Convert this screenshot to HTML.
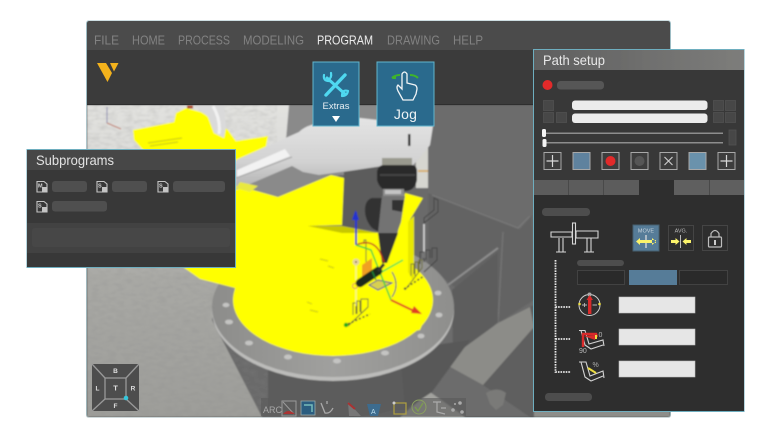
<!DOCTYPE html>
<html><head><meta charset="utf-8"><style>
html,body{margin:0;padding:0;background:#fff;width:768px;height:439px;overflow:hidden}
svg{display:block}
text{font-family:"Liberation Sans",sans-serif}
</style></head><body>
<svg width="768" height="439" viewBox="0 0 768 439" xmlns="http://www.w3.org/2000/svg">
<defs>
<filter id="b" x="-5%" y="-5%" width="110%" height="110%"><feGaussianBlur stdDeviation="0.7"/></filter>
<filter id="all" x="0" y="0" width="100%" height="100%"><feGaussianBlur stdDeviation="0.35"/></filter>
<filter id="n" x="0" y="0" width="100%" height="100%"><feTurbulence type="fractalNoise" baseFrequency="0.12 0.3" numOctaves="3" seed="4"/><feColorMatrix values="0 0 0 0 0.25 0 0 0 0 0.25 0 0 0 0 0.25 1.6 0 0 0 -0.6"/></filter>
<linearGradient id="floor" x1="0" y1="0" x2="0" y2="1"><stop offset="0" stop-color="#e2e2df"/><stop offset=".18" stop-color="#dcdcd9"/><stop offset=".55" stop-color="#a9a9a5"/><stop offset="1" stop-color="#9d9d99"/></linearGradient>
<linearGradient id="arm" x1="0" y1="0" x2="0" y2="1"><stop offset="0" stop-color="#e4e4e4"/><stop offset=".6" stop-color="#d2d2d2"/><stop offset="1" stop-color="#b0b0b0"/></linearGradient>
<linearGradient id="title" x1="0" y1="0" x2="1" y2="0"><stop offset="0" stop-color="#5f5f5f"/><stop offset="1" stop-color="#7d7d7b"/></linearGradient>
<linearGradient id="flange" x1="0" y1="0" x2="1" y2="0"><stop offset="0" stop-color="#8c8c8a"/><stop offset=".5" stop-color="#a0a09e"/><stop offset="1" stop-color="#8e8e8c"/></linearGradient>
</defs>
<g filter="url(#all)">
<!-- main window -->
<rect x="86.500" y="20.500" width="584" height="397" rx="3" fill="#4a4a4a" stroke="#9dbcc4"/>

<!-- scene -->
<g filter="url(#b)">
<rect x="87" y="105" width="583" height="312" fill="#6a6a6a"/>
<!-- floor -->
<polygon points="87,105 290,105 286,140 240,190 212,320 262,417 87,417" fill="url(#floor)"/>
<rect x="87" y="105" width="190" height="312" filter="url(#n)" opacity=".28"/>
<!-- back wall -->
<polygon points="289,105 430,105 430,175 340,175 280,198 240,190 286,140" fill="#8a8a8a"/>
<polygon points="344,172 384,165 384,232 342,226" fill="#5b5b5b"/>
<!-- floor strip near arm -->
<rect x="416" y="128" width="13" height="60" fill="#d6d6d0"/>
<rect x="418" y="142" width="11" height="2" fill="#e0d890"/><rect x="418" y="170" width="11" height="2" fill="#d8b070"/>
<!-- machine -->
<rect x="428" y="105" width="242" height="312" fill="#6c6c6c"/>
<polygon points="428,193 520,229 532,215 534,300 500,322 452,285 428,265" fill="#636363"/>
<path d="M432 195 L518 228 L530 216" fill="none" stroke="#7a7a7a" stroke-width="1.200"/>
<path d="M503 232 L498 322" stroke="#7a7a7a" stroke-width="1"/>
<path d="M448 285 L498 248" stroke="#8e8e8e" stroke-width="2"/>
<polygon points="452,290 498,252 498,322 453,360" fill="#5d5d5d"/>
<!-- slab -->
<polygon points="443,363 498,323 534,305 670,305 670,417 530,417 483,385" fill="#5e5e5e"/>
<polygon points="443,363 498,323 530,307 534,327 483,385" fill="#8c8c88"/>
<polygon points="534,300 670,300 670,417 534,417" fill="#8d8d89"/>
<!-- lower floor right -->
<polygon points="400,417 430,392 465,417" fill="#a2a29e"/>
<path d="M486 393 Q497 386 506 393 L503 405 L496 410 L490 404Z" fill="#7a7a78"/>
<!-- pedestal -->
<rect x="268" y="350" width="140" height="60" fill="#5c5c5c"/>
<ellipse cx="338" cy="398" rx="70" ry="19" fill="#5c5c5c"/>
<polygon points="400,350 470,340 432,392 405,410" fill="#585858"/>
<!-- flange -->
<ellipse cx="333" cy="310" rx="121" ry="71" fill="#bcbcba"/>
<ellipse cx="333" cy="307" rx="121" ry="70" fill="url(#flange)"/>
<g fill="#c4c4c2"><ellipse cx="226" cy="305" rx="3.500" ry="2.200"/><ellipse cx="229" cy="322" rx="4" ry="2.400"/><ellipse cx="249" cy="343" rx="4" ry="2.400"/><ellipse cx="288" cy="357" rx="4" ry="2.500"/><ellipse cx="337" cy="361" rx="4" ry="2.500"/><ellipse cx="385" cy="353" rx="4" ry="2.500"/><ellipse cx="421" cy="336" rx="3.500" ry="2.400"/><ellipse cx="439" cy="315" rx="3.500" ry="2.400"/><ellipse cx="438" cy="293" rx="3.500" ry="2.400"/></g>
<!-- yellow upper part -->
<polygon fill="#ffff00" points="133,130 134,140 143,150 235,162 266,147 268,136 236,141 228,130 209,117 201,112 186,108 176,113 174,122"/>
<!-- yellow main -->
<polygon fill="#ffff00" points="200,150 236,186 253,190 278,197 331,175 344,178 342,225 308,226 381,233 384,250 397,236 405,193 423,198 417,208 408,223 408,270 433,300 420,330 333,345 240,320 233,300 235,288 200,279 183,267 150,200"/>
<ellipse cx="333" cy="300" rx="100" ry="56" fill="#ffff00"/>
<polygon points="308,226 342,226 378,233 342,233" fill="#c7c700"/>
<polygon points="408,222 414,216 414,282 408,272" fill="#e8e800"/>
<g stroke="#cfcf10" stroke-width="1.200" fill="none"><path d="M148 143 L182 138M150 146 L178 142"/><path d="M320 259 L328 261M328 266 L334 268M307 302 L312 304M310 310 L318 312"/></g>
<!-- upper white thing -->
<path d="M191 105 H224 L226 127 L224 138 L214 133 L208 117 L201 110Z" fill="#dadada"/>
<path d="M213 106 Q221 120 219 134" stroke="#f2f2f2" stroke-width="3" fill="none"/>
<!-- axes small -->
<path d="M107 107 V123" stroke="#8a8ab0" stroke-width="1"/><path d="M107 123 L121 129" stroke="#c07a6a" stroke-width="1"/>
<path d="M187 107 H193" stroke="#b04a20" stroke-width="3"/>
<!-- arm -->
<path d="M236 160 L299 132 Q306 125 320 123 L360 118 L433 126 L430 145 L418 160 L412 166 H383 L356 170 L319 175 L303 172 L292 166 L236 190Z" fill="url(#arm)"/>
<polygon points="237,170 285,149 290,156 237,178" fill="#f2f2f2"/>
<path d="M236 178 L292 157" stroke="#a4a4a4" stroke-width="1.200"/>
<path d="M236 188 L250 192 L258 186 L240 182Z" fill="#e8e840"/>
<rect x="408" y="134" width="2.500" height="12" fill="#222"/>
<!-- wrist -->
<rect x="382" y="158" width="30" height="10" fill="#9a9a8e"/>
<path d="M377 172 Q378 165 384 165 H412 Q417 165 417 172 V180 Q415 191 405 191 H390 Q380 191 377 180Z" fill="#2b2b2b"/>
<path d="M380 175 H415" stroke="#4c4c4c" stroke-width="1.500"/>
<rect x="383" y="189" width="21" height="9" fill="#8c8c8c"/>
<rect x="385" y="190" width="16" height="4" fill="#c4c4c4"/>
<path d="M372 198 Q365 200 365 210 Q365 220 372 228 L382 234 L384 198Z" fill="#333"/>
<polygon points="382,196 405,196 401,222 397,233 378,233" fill="#737373"/>
<polygon points="392,200 404,200 402,212 392,210" fill="#303030"/>
<polygon points="378,233 398,233 387,263 382,263" fill="#303030"/>
<!-- brackets -->
<g fill="none" stroke="#444" stroke-width="1"><path d="M424 223 L438 212 V200 L434 198 V210 L424 218 V223Z"/><path d="M424 224 V258" stroke="#ddd" stroke-width="1.500"/><path d="M420 264 V252 H424 V262M426 260 V250 H430 V258M432 258 V248 H437 V260 L424 272"/></g>
<g fill="none" stroke="#707030" stroke-width="1"><path d="M411 276 V264 H414 V274M415 276 V262 H418 V272M419 272 V260 H422 V268 L405 290"/><path d="M353 315 V303 H356 V314M357 314 V301 H360 V312M361 313 V299 H368 V307 L348 326"/><path d="M364 244 V240 H366 V262"/></g>
<path d="M348 324 L370 314" stroke="#333" stroke-width="1.500" stroke-dasharray="2 2"/><circle cx="346" cy="325" r="2.200" fill="#1faa1f"/>
<path d="M404 289 L424 276" stroke="#333" stroke-width="1.500" stroke-dasharray="2 2"/>
<!-- widgets -->
<polygon points="378,280 392,283 378,290 369,285" fill="#d8d050" stroke="#4040a0" stroke-width="1"/>
<polygon points="362,265 372,258 372,272 362,280" fill="#f0a020"/>
<path d="M356 245 Q372 238 380 252 L384 262" fill="none" stroke="#c03020" stroke-width="1.400"/>
<path d="M356 245 V212" stroke="#2030d0" stroke-width="2"/><polygon points="355.500,210 352,220 359,220" fill="#2030d0"/>
<path d="M356 245 L371 250 L391 300" fill="none" stroke="#40d040" stroke-width="1.500"/><path d="M371 278 L403 260" stroke="#50e050" stroke-width="1.500"/>
<path d="M391 300 L414 311" stroke="#e04020" stroke-width="2"/><polygon points="422,314 411,313 414,306" fill="#e04020"/>
<path d="M392 272 Q400 285 392 297" fill="none" stroke="#303090" stroke-width="1"/>
<path d="M356 262 V280 M356 288 V306" stroke="#f4f0c0" stroke-width=".8"/>
<circle cx="356" cy="262" r="3" fill="#f0d8a0" stroke="#bbb" stroke-width=".5"/><circle cx="356" cy="262" r="1" fill="#664"/>
<circle cx="355" cy="286" r="2.500" fill="none" stroke="#e08060"/>
<path d="M360 283 L378 271" stroke="#1e2a1e" stroke-width="8.500" stroke-linecap="round"/>
<path d="M372 271 L376 280" stroke="#1f8a3a" stroke-width="1.200"/>
<path d="M378 271 L384 264" stroke="#333" stroke-width="3"/>
</g>

<!-- menu + toolbar -->
<path d="M87 24 Q87 21 90 21 H667 Q670 21 670 24 V50 H87Z" fill="#4b4b4b"/>
<rect x="87" y="50" width="583" height="55" fill="#3a3a3a"/>
<rect x="87" y="104" width="583" height="1" fill="#2e2e2e"/>
<g font-size="13" fill="#828282">
<text x="94" y="44.500" textLength="25" lengthAdjust="spacingAndGlyphs">FILE</text>
<text x="132" y="44.500" textLength="33" lengthAdjust="spacingAndGlyphs">HOME</text>
<text x="178" y="44.500" textLength="52" lengthAdjust="spacingAndGlyphs">PROCESS</text>
<text x="243" y="44.500" textLength="61" lengthAdjust="spacingAndGlyphs">MODELING</text>
<text x="317" y="44.500" textLength="56" lengthAdjust="spacingAndGlyphs" fill="#ececec">PROGRAM</text>
<text x="387" y="44.500" textLength="53" lengthAdjust="spacingAndGlyphs">DRAWING</text>
<text x="453" y="44.500" textLength="30" lengthAdjust="spacingAndGlyphs">HELP</text>
</g>
<!-- logo -->
<path d="M97 63 H106 L112 73 L107.500 82 Z" fill="#f3b21f"/><path d="M110 63 H118.500 L114 71.500Z" fill="#f3b21f"/>

<!-- Extras -->
<rect x="313" y="62" width="46" height="64" fill="#2b6a8d" stroke="#62b5cd"/>
<g fill="none" stroke="#4fd8f0" stroke-linecap="round">
<path d="M345 75 L326 95" stroke-width="3.400"/>
<path d="M327 78 L345 94" stroke-width="3"/>
<path d="M324 75 Q323 81 329 81 M331 73 Q332 78 328 80" stroke-width="2.200"/>
<path d="M348 91 Q342 89 342 96 M348 91 Q347 96 342 96" stroke-width="2.200"/>
</g>
<text x="336" y="109" font-size="9.500" fill="#e6eef2" text-anchor="middle">Extras</text>
<polygon points="332,116 340,116 336,122" fill="#fff"/>

<!-- Jog -->
<rect x="377" y="62" width="57" height="64" fill="#2b6a8d" stroke="#62b5cd"/>
<path d="M403 100 L398 91 Q396 87 398 85 L402 89 V74 Q404.500 70 407 74 V83 L415 85 Q417 86 417 89 L416 94 L413 100Z" fill="none" stroke="#f0f4f6" stroke-width="1.300"/>
<path d="M392 78 Q395 75 400 75" stroke="#3fb52a" stroke-width="2" fill="none"/><polygon points="392,79 396,75 396,79" fill="#3fb52a"/>
<path d="M410 75 Q415 75 418 78" stroke="#3fb52a" stroke-width="2" fill="none"/>
<text x="405.500" y="119" font-size="14" fill="#eef3f5" text-anchor="middle" letter-spacing=".2">Jog</text>

<!-- view cube -->
<polygon points="92,364 139,364 139,411 92,411" fill="#4e4e4e"/>
<path d="M92 364 L105 378 M139 364 L126 378 M92 411 L105 399 M139 411 L126 399" stroke="#999" stroke-width="1.300"/>
<rect x="105" y="378" width="21" height="21" fill="#4e4e4e" stroke="#999" stroke-width="1.300"/>
<circle cx="126" cy="398" r="2.300" fill="#35c7dc"/>
<g font-size="6.500" font-weight="bold" fill="#e0e0e0" text-anchor="middle"><text x="115.500" y="373">B</text><text x="115.500" y="408">F</text><text x="97.500" y="390.500">L</text><text x="133" y="390.500">R</text><text x="115.500" y="390.500" font-size="7.500">T</text></g>

<!-- bottom toolbar -->
<rect x="261" y="398" width="205" height="18" fill="#5a5a5a" opacity=".6"/>
<text x="263" y="413" font-size="9" fill="#a8a8a8">ARC</text>
<path d="M282 401 H296 V416 H282Z M283 402 L294 414" fill="none" stroke="#9a9a9a" stroke-width="1"/><path d="M283 414 Q288 408 295 414Z" fill="#a33"/>
<rect x="301" y="401" width="14" height="14" fill="#2c5d80" stroke="#9aa" stroke-width=".8"/><path d="M304 405 H312 V412" fill="none" stroke="#7bb" stroke-width="1.500"/>
<path d="M321 403 L325 413 Q330 414 333 408 M327 401 V404" fill="none" stroke="#aaa" stroke-width="1.300"/>
<polygon points="348,402 349,416 361,416" fill="#777"/><path d="M348 403 L355 409" stroke="#a33" stroke-width="2"/>
<polygon points="367,404 381,404 378,416 370,416" fill="#3c6c8f"/><text x="371" y="414" font-size="7" fill="#bde">A</text>
<rect x="394" y="403" width="12" height="11" fill="none" stroke="#b0a040" stroke-width="1.200"/><circle cx="394" cy="403" r="1.500" fill="#ccc"/>
<circle cx="419" cy="407" r="7" fill="none" stroke="#8aa060" stroke-width="1"/><path d="M415 407 L418 411 L423 403" fill="none" stroke="#7c9c50" stroke-width="1.300"/>
<path d="M433 402 H441 M437 402 V412 L445 414 M441 408 H446" fill="none" stroke="#aaa" stroke-width="1.200"/>
<g fill="#aaa"><circle cx="453" cy="410" r="1.800"/><circle cx="460" cy="403" r="1.800"/><circle cx="462" cy="412" r="1.800"/><circle cx="455" cy="404" r="1"/></g>

<!-- Subprograms panel -->
<rect x="26.500" y="149.500" width="209" height="118" fill="#393939" stroke="#6eaebf"/>
<rect x="27" y="150" width="208" height="20" fill="#474747"/>
<text x="36" y="165" font-size="14" fill="#e2e2e2" textLength="78" lengthAdjust="spacingAndGlyphs">Subprograms</text>
<rect x="27" y="223" width="208" height="30" fill="#434343"/>
<rect x="32" y="228" width="198" height="19" rx="3" fill="#474747"/>
<g fill="#4f4f4f">
<rect x="52" y="181" width="35" height="11" rx="3"/><rect x="112" y="181" width="35" height="11" rx="3"/><rect x="173" y="181" width="52" height="11" rx="3"/><rect x="52" y="201" width="55" height="10.500" rx="3"/>
</g>
<g fill="none" stroke="#c4c4c4" stroke-width="1.100">
<path d="M37 181.500 H44 L47 184 V192 H37Z"/><path d="M97 181.500 H104 L107 184 V192 H97Z"/><path d="M158 181.500 H165 L168 184 V192 H158Z"/><path d="M37 201.500 H44 L47 204 V212 H37Z"/>
</g>
<g fill="#c4c4c4"><rect x="42" y="187" width="4.500" height="4.500"/><rect x="102" y="187" width="4.500" height="4.500"/><rect x="163" y="187" width="4.500" height="4.500"/><rect x="42" y="207" width="4.500" height="4.500"/></g>
<g font-size="5.500" font-weight="bold" fill="#d0d0d0"><text x="38" y="187.500">M</text><text x="98" y="187.500">S</text><text x="159" y="187.500">S</text><text x="38" y="207.500">S</text></g>

<!-- Path setup panel -->
<rect x="533.500" y="49.500" width="211" height="362" fill="#2d2d2d" stroke="#6eaebf"/>
<rect x="534" y="50" width="210" height="20" fill="url(#title)"/>
<rect x="534" y="70" width="210" height="110" fill="#383838"/>
<text x="543" y="65" font-size="14" fill="#e8e8e8" textLength="62" lengthAdjust="spacingAndGlyphs">Path setup</text>
<circle cx="547.500" cy="85" r="5" fill="#e22a2a"/>
<rect x="557" y="81" width="47" height="8.500" rx="3.500" fill="#565656"/>
<g fill="#464646" stroke="#525252" stroke-width=".8">
<rect x="543.500" y="100.500" width="10" height="10"/><rect x="543.500" y="112.500" width="10" height="10"/><rect x="556.500" y="112.500" width="10" height="10"/>
<rect x="713.500" y="100.500" width="10" height="10"/><rect x="725.500" y="100.500" width="10" height="10"/><rect x="713.500" y="112.500" width="10" height="10"/><rect x="725.500" y="112.500" width="10" height="10"/>
<rect x="729" y="130" width="7" height="15"/>
</g>
<rect x="572" y="100.500" width="135.500" height="9.500" rx="3" fill="#ececec"/>
<rect x="572" y="113.500" width="135.500" height="9.500" rx="3" fill="#ececec"/>
<rect x="544" y="132.500" width="179" height="1.500" fill="#8d8d8d"/>
<rect x="544" y="142" width="179" height="1.500" fill="#8d8d8d"/>
<rect x="542" y="129" width="4" height="8" rx="1.500" fill="#f4f4f4"/>
<rect x="542.500" y="139" width="4" height="8" rx="1.500" fill="#f4f4f4"/>
<g fill="#3d3d3d" stroke="#a8a8a8" stroke-width="1">
<rect x="544" y="152.500" width="17" height="17"/><rect x="573" y="152.500" width="17" height="17" fill="#5e829e"/><rect x="602" y="152.500" width="17" height="17"/><rect x="631" y="152.500" width="17" height="17"/><rect x="660" y="152.500" width="17" height="17"/><rect x="689" y="152.500" width="17" height="17" fill="#6a92ac"/><rect x="718" y="152.500" width="17" height="17"/>
</g>
<path d="M552.500 155 V167 M546.500 161 H558.500 M726.500 155 V167 M720.500 161 H732.500" stroke="#d8d8d8" stroke-width="1.200"/>
<path d="M664.500 157 L672.500 165 M672.500 157 L664.500 165" stroke="#d0d0d0" stroke-width="1.100"/>
<circle cx="610.500" cy="161" r="5" fill="#e22a2a"/>
<circle cx="639.500" cy="161" r="5" fill="#575757"/>
<!-- tabs -->
<rect x="534" y="180" width="105" height="15" fill="#5b5b5b"/><rect x="674" y="180" width="70" height="15" fill="#5e5e5e"/>
<path d="M568.500 180 V195 M603.500 180 V195 M709.500 180 V195" stroke="#4a4a4a"/>
<rect x="639" y="180" width="35" height="15" fill="#2d2d2d"/>
<!-- lower -->
<rect x="542" y="208" width="48" height="8" rx="3.500" fill="#4d4d4d"/>
<!-- gantry -->
<g fill="none" stroke="#d8d8d8" stroke-width="1.100">
<path d="M551 232 H572 V237 H551Z M576 231 H598 V238 H576Z" /><rect x="572.500" y="223" width="3" height="21" fill="#2d2d2d"/>
<path d="M559 238 V252 M563 238 V252 M556 252 H566 M587 238 V252 M591 238 V252 M584 252 H594"/>
</g>
<rect x="633" y="225" width="26" height="26" fill="#567b98" stroke="#47616f"/>
<rect x="668.500" y="225.500" width="25" height="25" fill="#2d2d2d" stroke="#444"/>
<rect x="702.500" y="225.500" width="25" height="25" fill="#2d2d2d" stroke="#444"/>
<text x="646" y="232.500" font-size="5.500" fill="#c8d4dc" text-anchor="middle">MOVE</text>
<text x="681" y="232.500" font-size="5.500" fill="#b8b8b8" text-anchor="middle">AVG.</text>
<path d="M646 235 V248" stroke="#c8d0d4" stroke-width="1.500"/>
<path d="M636 241.500 L640 238 V240 H656 V243 H640 V245Z M656 241.500 L652 238 V245Z" fill="#fbf36a"/>
<path d="M680.500 235 V248" stroke="#bbb" stroke-width="1"/>
<path d="M679.500 241.500 L675.500 238 V240 H671 V243 H675.500 V245Z M682.500 241.500 L686.500 238 V240 H691 V243 H686.500 V245Z" fill="#fbf36a"/>
<rect x="708.500" y="237" width="13" height="10" rx="1" fill="none" stroke="#bdbdbd" stroke-width="1.200"/>
<path d="M711 237 V233.500 Q715 227.500 719 233.500 V237" fill="none" stroke="#bdbdbd" stroke-width="1.200"/>
<path d="M715 240 V245" stroke="#ccc" stroke-width="2"/>
<!-- dotted tree -->
<path d="M555.500 260 V372 H571 M555.500 307 H571 M555.500 339 H571" fill="none" stroke="#e8e8e8" stroke-width="1.800" stroke-dasharray="1.600 1"/>
<rect x="577" y="260" width="47" height="6" rx="3" fill="#4d4d4d"/>
<rect x="577.500" y="270.500" width="47" height="14" fill="#2b2b2b" stroke="#434343"/>
<rect x="629" y="270" width="48" height="15" fill="#567b98"/>
<rect x="679.500" y="270.500" width="48" height="14" fill="#2b2b2b" stroke="#434343"/>
<g fill="#e6e6e6" stroke="#bdbdbd" stroke-width=".6">
<rect x="619" y="297" width="76" height="16"/><rect x="619" y="329" width="76" height="16"/><rect x="619" y="361" width="76" height="16"/>
</g>
<!-- dial -->
<circle cx="589.500" cy="305" r="10.500" fill="none" stroke="#d0d0d0" stroke-width="1"/>
<circle cx="589.500" cy="294.500" r="2" fill="#aaa"/><circle cx="579.500" cy="304" r="1.300" fill="#f0e040"/><circle cx="599.500" cy="304" r="1.300" fill="#f0e040"/>
<rect x="588" y="297" width="3.400" height="17" fill="#d92a2a"/><polygon points="589.700,295 586.500,300 593,300" fill="#d92a2a"/>
<path d="M582 305 H587 M584.500 303 V307 M592.500 305 H597" stroke="#b8b8b8" stroke-width=".9"/>
<!-- angle icon -->
<g fill="none" stroke="#d4d4d4" stroke-width="1.100">
<path d="M579 330.500 H585 L589 344 L603 340 L604 346 M581 330.500 L585 345 L591 349 L603 345"/>
<path d="M579 362 H586 L590 376 L603 371 L604 378 M581 362 L585 377 L591 381 L603 376"/>
</g>
<path d="M583 347 V334 H596 L597 337" fill="none" stroke="#d92a2a" stroke-width="2.400"/>
<polygon points="584,336 596,335 595,340" fill="#d92a2a"/><rect x="595" y="335" width="2" height="4" fill="#f0e040"/>
<text x="598.500" y="337" font-size="7" fill="#b8b8b8">0</text>
<text x="579" y="353" font-size="7" fill="#b8b8b8">90</text>
<text x="592.500" y="367" font-size="7" fill="#b0b0b0">%</text>
<path d="M588 368 L596 373" stroke="#ecdc40" stroke-width="2"/>
<rect x="545" y="393" width="47" height="8" rx="3.500" fill="#4d4d4d"/>
</g>
</svg>
</body></html>
